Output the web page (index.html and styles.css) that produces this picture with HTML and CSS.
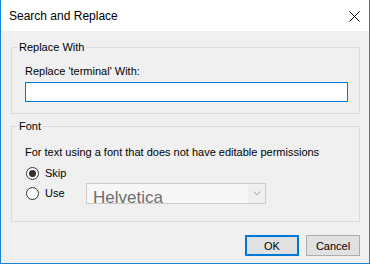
FILE: index.html
```html
<!DOCTYPE html>
<html lang="en">
<head>
    <meta charset="UTF-8">
    <title>Search and Replace</title>
    <link rel="stylesheet" href="styles.css">
</head>
<body>
    <div class="window">
        <div class="titlebar">
            <span class="title">Search and Replace</span>
            <svg class="close" width="11" height="11" viewBox="0 0 11 11">
                <path d="M0.5 0.5 L10.5 10.5 M10.5 0.5 L0.5 10.5" stroke="#000" stroke-width="1" fill="none"/>
            </svg>
        </div>

        <div class="content">
            <fieldset class="group">
                <legend>Replace With</legend>
                <div class="group-body replace-body">
                    <label for="replaceText" class="field-label">Replace 'terminal' With:</label>
                    <input type="text" id="replaceText" class="text-input">
                </div>
            </fieldset>

            <fieldset class="group group-font">
                <legend>Font</legend>
                <div class="group-body font-body">
                    <p class="hint">For text using a font that does not have editable permissions</p>
                    <div class="options">
                        <label class="option option-skip">
                            <input type="radio" name="fontMode" checked>
                            <span class="option-label">Skip</span>
                        </label>
                        <label class="option option-use">
                            <input type="radio" name="fontMode">
                            <span class="option-label">Use</span>
                            <span class="combo">
                                <span class="combo-text">Helvetica</span>
                                <span class="combo-arrow">
                                    <svg width="8" height="5" viewBox="0 0 8 5">
                                        <path d="M0.5 0.5 L4 4 L7.5 0.5" stroke="#a6a6a6" stroke-width="1" fill="none"/>
                                    </svg>
                                </span>
                            </span>
                        </label>
                    </div>
                </div>
            </fieldset>

            <div class="actions">
                <button class="btn btn-default">OK</button>
                <button class="btn">Cancel</button>
            </div>
        </div>
    </div>
</body>
</html>
```

FILE: styles.css
```css
/* Global */
* {
    box-sizing: border-box;
}

body {
    margin: 0;
    font-family: "Liberation Sans", Arial, sans-serif;
    font-size: 11px;
    color: #000;
    background: #f0f0f0;
}

/* Window frame */
.window {
    width: 370px;
    height: 264px;
    border: 1px solid #1883d7;
    border-top: none;
    background: #f0f0f0;
    display: flex;
    flex-direction: column;
}

.titlebar {
    height: 31px;
    flex: none;
    background: #fff;
    display: flex;
    align-items: center;
    justify-content: space-between;
    padding: 0 9px 0 8px;
}

.title {
    font-size: 12px;
    line-height: 15px;
    padding-top: 1px;
}

.close {
    display: block;
    margin-top: 1px;
}

/* Dialog content */
.content {
    padding: 10px 9px 0 10px;
}

.group {
    margin: 0;
    padding: 0;
    min-width: 0;
    border: 1px solid #dcdcdc;
}

.group legend {
    margin-left: 5px;
    padding: 0 2px;
    line-height: 13px;
}

.group-font {
    margin-top: 6px;
}

.group-body {
    padding: 11px 11px 11px 13px;
}

.field-label {
    display: block;
    line-height: 13px;
}

.text-input {
    display: block;
    width: 100%;
    height: 20px;
    margin: 4px 0 0;
    border: 1px solid #0078d7;
    background: #fff;
    outline: none;
    font: inherit;
}

/* Font group */
.font-body {
    padding-top: 13px;
    padding-bottom: 17px;
}

.hint {
    margin: 0;
    line-height: 13px;
}

.options {
    margin-top: 4px;
}

.option {
    display: flex;
    align-items: center;
}

.option-skip {
    height: 20px;
}

.option-use {
    height: 21px;
}

.option input[type="radio"] {
    appearance: none;
    -webkit-appearance: none;
    width: 13px;
    height: 13px;
    margin: 0 6px 0 1px;
    border: 1px solid #333;
    border-radius: 50%;
    background: #fff;
    display: flex;
    align-items: center;
    justify-content: center;
}

.option input[type="radio"]:checked::after {
    content: "";
    width: 7px;
    height: 7px;
    border-radius: 50%;
    background: #333;
}

.option-label {
    width: 41px;
    line-height: 13px;
}

/* Disabled combo box, its text runs past the bottom edge */
.combo {
    width: 180px;
    height: 21px;
    border: 1px solid #cccccc;
    display: flex;
    overflow: hidden;
}

.combo-text {
    flex: 1;
    background: #f7f7f7;
    color: #6d6d6d;
    font-size: 17px;
    line-height: 17px;
    padding: 5px 0 0 6px;
}

.combo-arrow {
    width: 17px;
    background: #f0f0f0;
    display: flex;
    align-items: center;
    justify-content: center;
}

.combo-arrow svg {
    display: block;
}

/* Buttons */
.actions {
    margin-top: 13px;
    display: flex;
    justify-content: flex-end;
    gap: 7px;
}

.btn {
    width: 54px;
    height: 21px;
    padding: 0;
    border: 1px solid #adadad;
    background: #e1e1e1;
    font: inherit;
    color: #000;
}

.btn-default {
    border: 2px solid #0078d7;
}
```
